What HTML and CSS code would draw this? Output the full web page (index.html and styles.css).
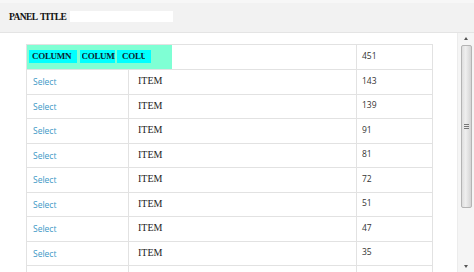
FILE: index.html
```html
<!DOCTYPE html>
<html>
<head>
<meta charset="utf-8">
<link rel="stylesheet" href="styles.css">
</head>
<body>
<div class="titlebar">
  <span class="title">PANEL TITLE</span>
  <div class="title-field"></div>
</div>
<div class="content">
  <div class="main">
    <table class="grid">
      <colgroup><col class="c1"><col class="c2"><col class="c3"></colgroup>
      <tr class="head">
        <td colspan="2" class="headcell">
          <div class="colbar">
            <span class="colname w1"><span class="txt">COLUMN</span></span>
            <span class="colname w2"><span class="txt">COLUMN</span></span>
            <span class="colname w3"><span class="txt">COLUMN</span></span>
          </div>
        </td>
        <td class="num">451</td>
      </tr>
      <tr><td><a class="sel">Select</a></td><td class="item">ITEM</td><td class="num">143</td></tr>
      <tr><td><a class="sel">Select</a></td><td class="item">ITEM</td><td class="num">139</td></tr>
      <tr><td><a class="sel">Select</a></td><td class="item">ITEM</td><td class="num">91</td></tr>
      <tr><td><a class="sel">Select</a></td><td class="item">ITEM</td><td class="num">81</td></tr>
      <tr><td><a class="sel">Select</a></td><td class="item">ITEM</td><td class="num">72</td></tr>
      <tr><td><a class="sel">Select</a></td><td class="item">ITEM</td><td class="num">51</td></tr>
      <tr><td><a class="sel">Select</a></td><td class="item">ITEM</td><td class="num">47</td></tr>
      <tr><td><a class="sel">Select</a></td><td class="item">ITEM</td><td class="num">35</td></tr>
      <tr><td></td><td></td><td></td></tr>
    </table>
  </div>
  <div class="scrollbar">
    <div class="arrow up"></div>
    <div class="thumb"><div class="grip"></div></div>
    <div class="track"></div>
    <div class="arrow down"></div>
  </div>
</div>
</body>
</html>
```
FILE: styles.css
```css
html, body {
  margin: 0;
  padding: 0;
  width: 474px;
  height: 272px;
  overflow: hidden;
  background: #ffffff;
}
.titlebar {
  box-sizing: border-box;
  height: 33px;
  background: #f2f2f2;
  border-top: 3px solid #f7f7f7;
  border-bottom: 1px solid #e4e4e4;
  display: flex;
  align-items: center;
  padding-left: 9px;
  padding-bottom: 2px;
}
.title {
  font-family: "Liberation Serif", serif;
  font-weight: bold;
  font-size: 9.5px;
  letter-spacing: -0.6px;
  word-spacing: 1.5px;
  color: #111111;
}
.title-field {
  width: 103px;
  height: 11px;
  background: #ffffff;
  margin-left: 4px;
}
.content {
  display: flex;
  height: 239px;
  overflow: hidden;
}
.main {
  flex: 1;
  padding: 11px 0 0 26px;
  overflow: hidden;
}
.grid {
  border-collapse: collapse;
  table-layout: fixed;
  width: 406px;
}
.c1 { width: 102px; }
.c2 { width: 228px; }
.c3 { width: 76px; }
.grid td {
  border: 1px solid #e2e2e2;
  height: 24.5px;
  padding: 0 0 3px 6px;
  box-sizing: border-box;
  vertical-align: middle;
}
.grid tr.head td {
  height: 25px;
}
.grid td.headcell {
  padding: 0;
  vertical-align: top;
}
.colbar {
  width: 145px;
  height: 24px;
  background: #7fffd4;
  display: flex;
  align-items: flex-start;
  gap: 2.5px;
  padding: 5px 0 0 2px;
  box-sizing: border-box;
}
.colname {
  display: block;
  background: #00ffff;
  height: 13px;
  line-height: 13px;
  overflow: hidden;
  white-space: nowrap;
  font-family: "Liberation Serif", serif;
  font-weight: bold;
  font-size: 9px;
  letter-spacing: -0.3px;
  color: #0b2330;
  box-sizing: border-box;
}
.txt {
  display: block;
  overflow: hidden;
  white-space: nowrap;
}
.w1 { width: 48px; padding-left: 3px; }
.w2 { width: 35px; padding-left: 2px; }
.w3 { width: 34px; padding-left: 5px; }
.w3 .txt { width: 23px; }
.sel {
  font-family: "Open Sans", sans-serif;
  font-size: 8.5px;
  color: #3b98c6;
}
.grid td.item {
  font-family: "Liberation Serif", serif;
  font-size: 10px;
  color: #222222;
  padding-left: 9px;
  padding-bottom: 2px;
}
.grid td.num {
  font-family: "Open Sans", sans-serif;
  font-size: 8.5px;
  color: #333333;
  padding-left: 5px;
}
.scrollbar {
  width: 17px;
  box-sizing: border-box;
  background: #f5f5f5;
  border-left: 1px solid #ececec;
  display: flex;
  flex-direction: column;
  align-items: center;
  padding-top: 2px;
}
.arrow {
  width: 0;
  height: 0;
  border-left: 2.5px solid transparent;
  border-right: 2.5px solid transparent;
}
.arrow.up {
  border-bottom: 3px solid #555555;
  margin: 2px 0 5px;
}
.arrow.down {
  border-top: 3px solid #555555;
  margin: 0 0 4px;
}
.thumb {
  width: 11px;
  height: 163px;
  box-sizing: border-box;
  border: 1px solid #b4b4b4;
  border-radius: 2px;
  background: linear-gradient(to right, #dedede, #efefef 40%, #d4d4d4);
  display: flex;
  align-items: center;
  justify-content: center;
}
.grip {
  width: 5px;
  height: 5px;
  background: repeating-linear-gradient(to bottom, #777777 0, #777777 1px, transparent 1px, transparent 2px);
}
.track {
  flex: 1;
}
```
